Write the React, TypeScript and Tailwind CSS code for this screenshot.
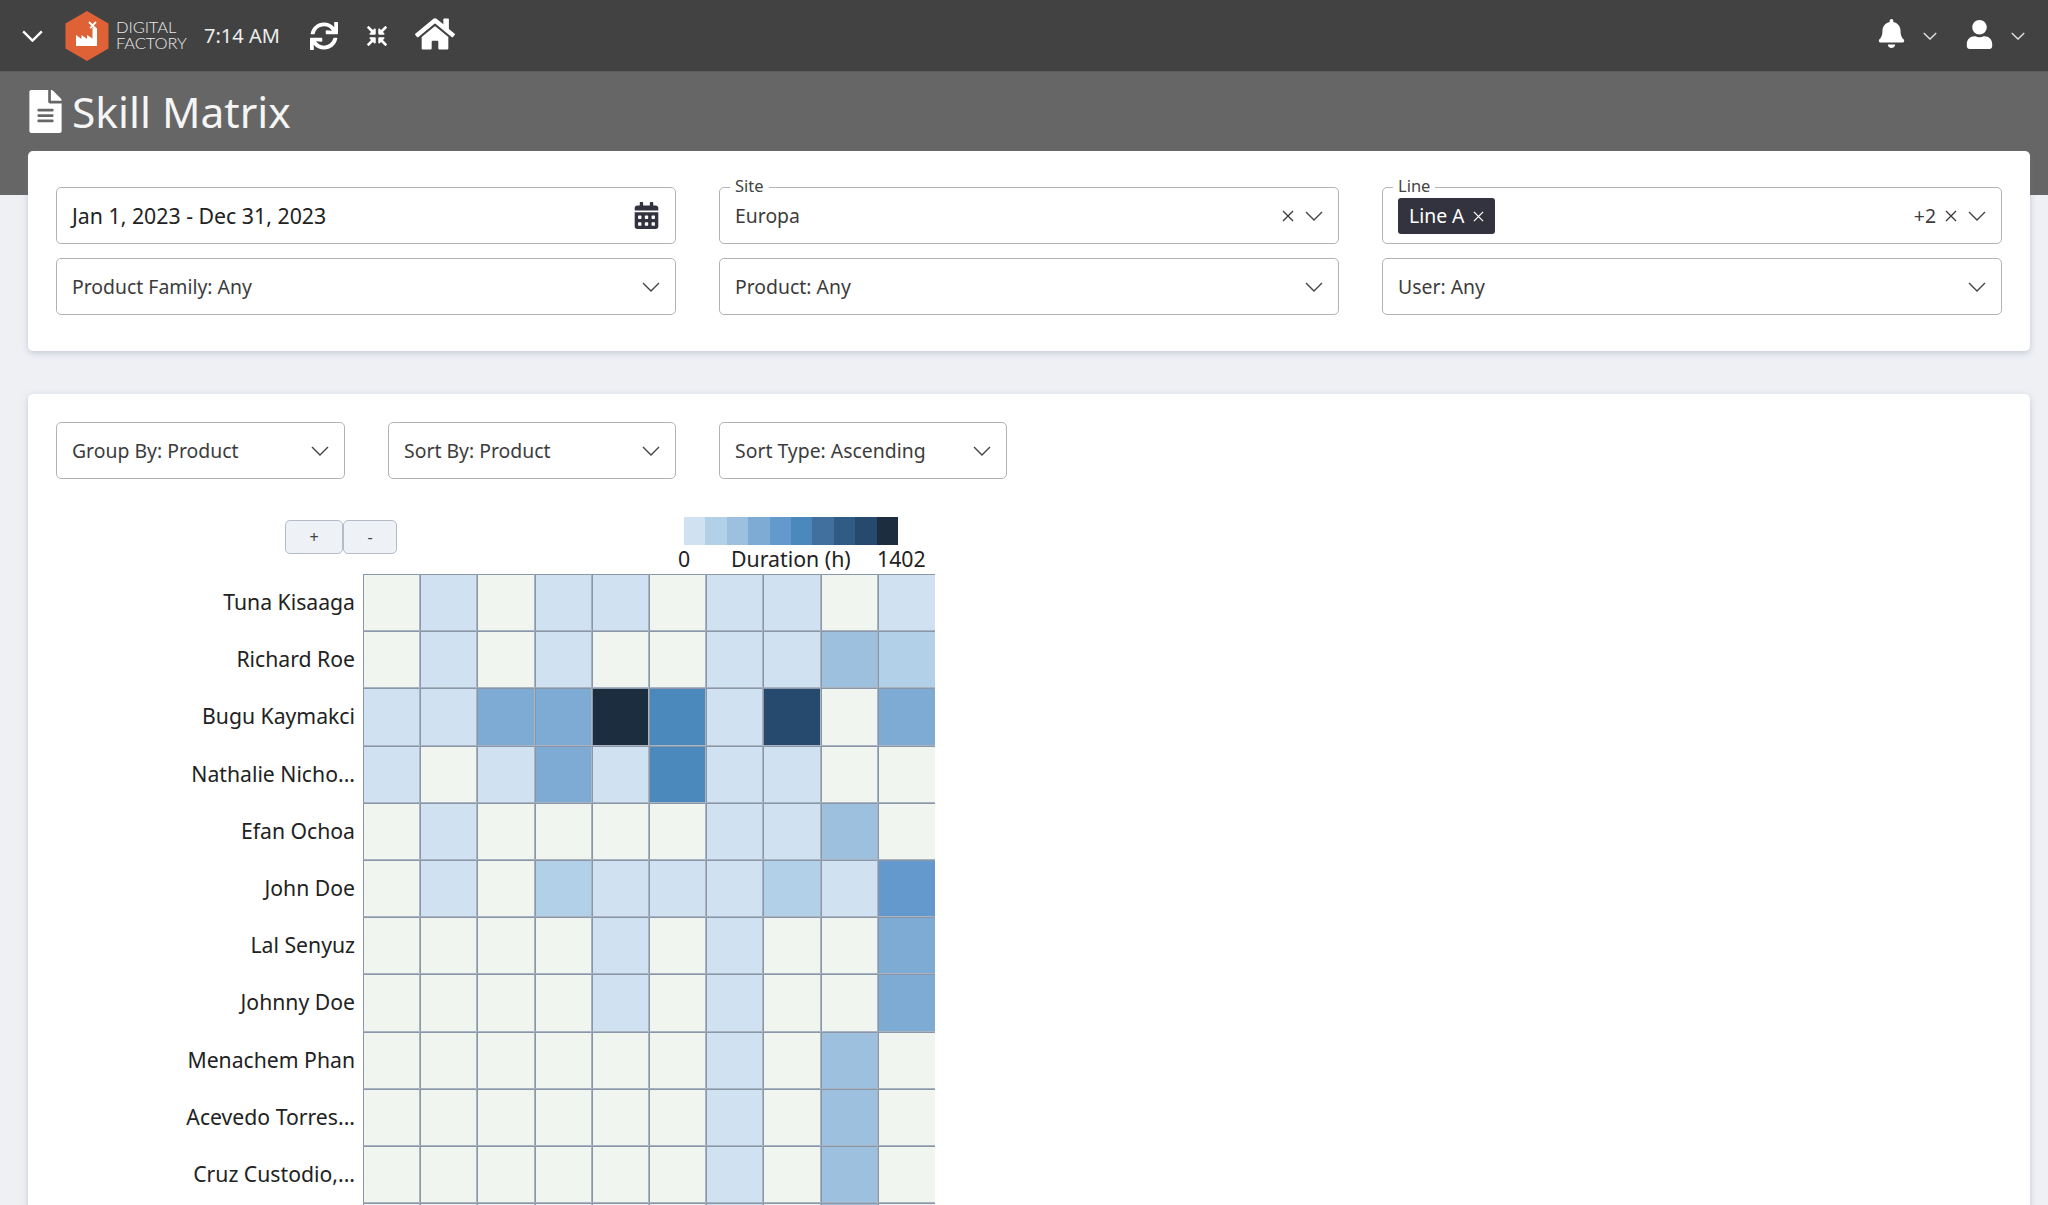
import { FC, ReactNode } from 'react';
import { FaBell, FaCalendarAlt, FaCompressArrowsAlt, FaFileAlt, FaHome, FaSync, FaUser } from 'react-icons/fa';

const SCALE = ['#f0f5f0', '#d0e1f1', '#b2d0e8', '#9cc0dd', '#7dabd4', '#6399cc', '#4b88bc', '#41709e', '#2f5b85', '#264a6e', '#1b2d3f'];

const LEGEND = ['#d0e1f1', '#b2d0e8', '#9cc0dd', '#7dabd4', '#6399cc', '#4b88bc', '#41709e', '#2f5b85', '#264a6e', '#1b2d3f'];

const ROWS: { name: string; cells: number[] }[] = [
  { name: 'Tuna Kisaaga', cells: [0, 1, 0, 1, 1, 0, 1, 1, 0, 1] },
  { name: 'Richard Roe', cells: [0, 1, 0, 1, 0, 0, 1, 1, 3, 2] },
  { name: 'Bugu Kaymakci', cells: [1, 1, 4, 4, 10, 6, 1, 9, 0, 4] },
  { name: 'Nathalie Nicho...', cells: [1, 0, 1, 4, 1, 6, 1, 1, 0, 0] },
  { name: 'Efan Ochoa', cells: [0, 1, 0, 0, 0, 0, 1, 1, 3, 0] },
  { name: 'John Doe', cells: [0, 1, 0, 2, 1, 1, 1, 2, 1, 5] },
  { name: 'Lal Senyuz', cells: [0, 0, 0, 0, 1, 0, 1, 0, 0, 4] },
  { name: 'Johnny Doe', cells: [0, 0, 0, 0, 1, 0, 1, 0, 0, 4] },
  { name: 'Menachem Phan', cells: [0, 0, 0, 0, 0, 0, 1, 0, 3, 0] },
  { name: 'Acevedo Torres...', cells: [0, 0, 0, 0, 0, 0, 1, 0, 3, 0] },
  { name: 'Cruz Custodio,...', cells: [0, 0, 0, 0, 0, 0, 1, 0, 3, 0] },
  { name: '', cells: [0, 0, 0, 0, 0, 0, 1, 0, 3, 0] },
];

const Chevron: FC<{ className?: string; weight?: number }> = ({ className, weight = 1.4 }) => (
  <svg viewBox="0 0 18 10" fill="none" stroke="currentColor" className={className}>
    <path d="M1 1l8 8 8-8" strokeWidth={weight} />
  </svg>
);

const Cross: FC<{ className?: string }> = ({ className }) => (
  <svg viewBox="0 0 12 12" fill="none" stroke="currentColor" className={className}>
    <path d="M1 1l10 10M11 1L1 11" strokeWidth="1.4" />
  </svg>
);

const Logo = () => (
  <div className="flex items-center gap-[7px]">
    <svg viewBox="0 0 44 50" className="w-[44px] h-[50px]">
      <path d="M22 0l21.500 12.500v25L22 50 .5 37.500v-25z" fill="#df6236" />
      <path d="M11 35V24l5.500 4v-4l5.500 4v-4l5.500 3.500V17h4.500v18z" fill="#fff" />
      <path d="M24 11l7 7M31 11l-4 4M25 17l3-2" stroke="#fff" strokeWidth="1.800" fill="none" />
    </svg>
    <span className="block w-[74px] text-[#e8e8e8] text-[16.500px] leading-[15.500px] tracking-[-0.1px] font-light font-['Lato',sans-serif]">
      DIGITAL FACTORY
    </span>
  </div>
);

const Field: FC<{ label?: string; className?: string; children: ReactNode }> = ({ label, className, children }) => (
  <div className={`relative h-[57px] border border-[#b3b3b3] rounded-[5px] bg-white flex items-center pl-[15px] pr-[15px] text-[#3c3c3c] ${className ?? ''}`}>
    {label && (
      <span className="absolute left-[10px] top-[-13px] px-[5px] bg-white text-[16.500px] leading-[22px] text-[#444]">{label}</span>
    )}
    {children}
  </div>
);

const Select: FC<{ text: string; className?: string }> = ({ text, className }) => (
  <Field className={className}>
    <span className="flex-1 text-[19.400px]">{text}</span>
    <Chevron className="w-[18px] h-[10px] text-[#444]" />
  </Field>
);

const App = () => {
  return (
    <div className="h-screen overflow-hidden bg-[#eef0f4] font-['Noto_Sans','Open_Sans',sans-serif]">
      <header className="h-[71px] bg-[#424242] flex items-center text-white">
        <Chevron weight={2} className="w-[21px] h-[12px] ml-[22px] mr-[22px] text-white" />
        <Logo />
        <span className="ml-[14px] text-[20px] text-[#eee]">7:14 AM</span>
        <FaSync className="ml-[30px] text-[28px]" />
        <FaCompressArrowsAlt className="ml-[29px] text-[20px]" />
        <FaHome className="ml-[28px] -mt-[4px] text-[40px]" />
        <div className="ml-auto flex items-center">
          <FaBell className="text-[29px] -mt-[4px]" />
          <Chevron weight={1.800} className="w-[14px] h-[8px] ml-[17px] text-[#ddd]" />
          <FaUser className="text-[29px] ml-[28px] -mt-[3px]" />
          <Chevron weight={1.800} className="w-[14px] h-[8px] ml-[17px] mr-[23px] text-[#ddd]" />
        </div>
      </header>

      <div className="h-[124px] bg-[#666666] border-t border-[#5c5c5c] flex items-start pl-[24px] pt-[12px] text-white">
        <FaFileAlt className="text-[43px] mt-[6px] text-white" />
        <h1 className="ml-[5px] text-[42.500px] leading-[56px] text-[#f5f5f5]">Skill Matrix</h1>
      </div>

      <div className="ml-[28px] mr-[18px] -mt-[44px] relative">
        <section className="h-[200px] bg-white rounded-[5px] shadow-[0_2px_6px_rgba(120,130,150,0.35)] px-[28px] pt-[36px]">
          <div className="grid grid-cols-3 gap-x-[43px] gap-y-[14px]">
            <Field>
              <span className="flex-1 text-[21.300px] text-[#222]">Jan 1, 2023 - Dec 31, 2023</span>
              <FaCalendarAlt className="text-[27px] text-[#33333f]" />
            </Field>
            <Field label="Site">
              <span className="flex-1 text-[19.400px]">Europa</span>
              <Cross className="w-[12px] h-[12px] mr-[11px]" />
              <Chevron className="w-[18px] h-[10px] text-[#444]" />
            </Field>
            <Field label="Line">
              <span className="flex items-center gap-[8px] h-[36px] mt-[1px] rounded-[3px] bg-[#33333f] px-[11px] text-[19.400px] text-white">
                Line A <Cross className="w-[11px] h-[11px]" />
              </span>
              <span className="ml-auto text-[19.400px]">+2</span>
              <Cross className="w-[12px] h-[12px] ml-[9px] mr-[11px]" />
              <Chevron className="w-[18px] h-[10px] text-[#444]" />
            </Field>
            <Select text="Product Family: Any" />
            <Select text="Product: Any" />
            <Select text="User: Any" />
          </div>
        </section>

        <section className="mt-[43px] h-[900px] bg-white rounded-[5px] shadow-[0_2px_6px_rgba(120,130,150,0.35)] pl-[28px] pt-[28px]">
          <div className="flex gap-[43px]">
            <Select text="Group By: Product" className="w-[289px]" />
            <Select text="Sort By: Product" className="w-[288px]" />
            <Select text="Sort Type: Ascending" className="w-[288px]" />
          </div>

          <div className="flex items-start mt-[38px] h-[57px]">
            <div className="flex ml-[229px] mt-[3px]">
              <button className="w-[58px] h-[34px] rounded-[5px] border border-[#b5bcc6] bg-[#eef1f5] text-[16px] text-[#444]">+</button>
              <button className="w-[54px] h-[34px] rounded-[5px] border border-[#b5bcc6] bg-[#eef1f5] text-[16px] text-[#444]">-</button>
            </div>
            <div className="ml-[287px] w-[240px]">
              <div className="flex h-[28px] w-[214px]">
                {LEGEND.map(color => (
                  <div key={color} className="flex-1" style={{ backgroundColor: color }} />
                ))}
              </div>
              <div className="relative h-[29px] text-[21.300px] leading-[28px] text-[#222]">
                <span className="absolute left-[-6px]">0</span>
                <span className="absolute left-[47px]">Duration (h)</span>
                <span className="absolute left-[193px]">1402</span>
              </div>
            </div>
          </div>

          <div className="flex flex-col">
            {ROWS.map((row, i) => (
              <div key={i} className="flex h-[57.200px]">
                <div className="w-[307px] pr-[8px] text-right text-[21.200px] leading-[55px] text-[#222] whitespace-nowrap">{row.name}</div>
                <div className="grid grid-cols-10 w-[572px]">
                  {row.cells.map((v, j) => (
                    <div key={j} className="border-l border-t border-r border-b border-l-[#8a97a8] border-t-[#8a97a8] border-r-[#a9b3c0] border-b-[#a9b3c0] last:border-r-0" style={{ backgroundColor: SCALE[v] }} />
                  ))}
                </div>
              </div>
            ))}
          </div>
        </section>
      </div>
    </div>
  );
};

export default App;
